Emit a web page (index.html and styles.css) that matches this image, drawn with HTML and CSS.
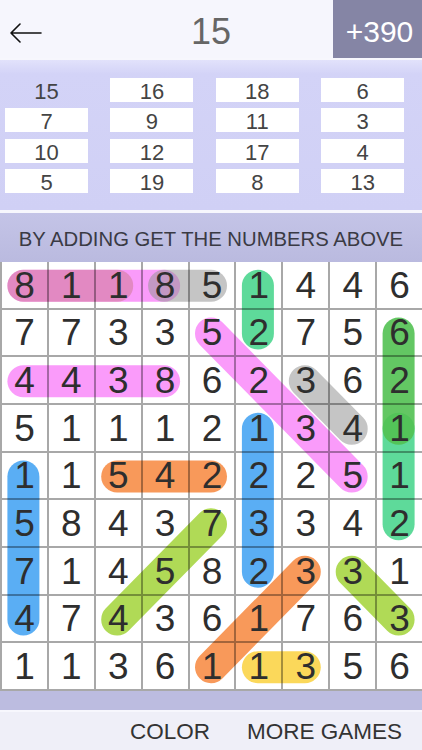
FILE: index.html
```html
<!DOCTYPE html>
<html>
<head>
<meta charset="utf-8">
<link rel="stylesheet" href="styles.css">
</head>
<body>
<div class="app">
  <header class="topbar">
    <div class="back">
      <svg width="32" height="20" viewBox="0 0 32 20"><path d="M1 10 H31 M10 1 L1 10 L10 19" fill="none" stroke="#111" stroke-width="1.6" stroke-linecap="round" stroke-linejoin="round"/></svg>
    </div>
    <div class="title">15</div>
    <div class="score">+390</div>
  </header>

  <section class="targets">
    <div class="tgrid">
      <div class="t current">15</div><div class="t">16</div><div class="t">18</div><div class="t">6</div>
      <div class="t">7</div><div class="t">9</div><div class="t">11</div><div class="t">3</div>
      <div class="t">10</div><div class="t">12</div><div class="t">17</div><div class="t">4</div>
      <div class="t">5</div><div class="t">19</div><div class="t">8</div><div class="t">13</div>
    </div>
  </section>

  <div class="banner">BY ADDING GET THE NUMBERS ABOVE</div>

  <section class="board">
    <svg class="pills" width="422" height="429" viewBox="0 0 422 429">
      <g fill="none" stroke-linecap="round" stroke-width="32">
        <line x1="23.4" y1="23.8" x2="164.1" y2="23.8" stroke="rgba(247,88,247,0.6)"/>
        <line x1="23.4" y1="23.8" x2="117.2" y2="23.8" stroke="rgba(190,110,110,0.4)"/>
        <line x1="164.1" y1="23.8" x2="211" y2="23.8" stroke="rgba(150,150,150,0.55)"/>
        <line x1="257.9" y1="23.8" x2="257.9" y2="71.5" stroke="rgba(40,205,120,0.75)"/>
        <line x1="211" y1="71.5" x2="351.7" y2="214.5" stroke="rgba(247,88,247,0.6)"/>
        <line x1="23.4" y1="119.2" x2="164.1" y2="119.2" stroke="rgba(247,88,247,0.6)"/>
        <line x1="304.8" y1="119.2" x2="351.7" y2="166.8" stroke="rgba(150,150,150,0.55)"/>
        <line x1="398.6" y1="166.8" x2="398.6" y2="262.2" stroke="rgba(40,205,120,0.75)"/>
        <line x1="398.6" y1="71.5" x2="398.6" y2="166.8" stroke="rgba(82,193,82,0.9)"/>
        <line x1="257.9" y1="166.8" x2="257.9" y2="309.8" stroke="rgba(20,140,240,0.7)"/>
        <line x1="23.4" y1="214.5" x2="23.4" y2="357.5" stroke="rgba(20,140,240,0.7)"/>
        <line x1="117.2" y1="214.5" x2="211" y2="214.5" stroke="rgba(245,110,20,0.7)"/>
        <line x1="117.2" y1="357.5" x2="211" y2="262.2" stroke="rgba(150,205,30,0.75)"/>
        <line x1="304.8" y1="309.8" x2="211" y2="405.2" stroke="rgba(245,110,20,0.7)"/>
        <line x1="351.7" y1="309.8" x2="398.6" y2="357.5" stroke="rgba(150,205,30,0.75)"/>
        <line x1="257.9" y1="405.2" x2="304.8" y2="405.2" stroke="rgba(250,200,20,0.7)"/>
      </g>
    </svg>
    <div class="c">8</div><div class="c">1</div><div class="c">1</div><div class="c">8</div><div class="c">5</div><div class="c">1</div><div class="c">4</div><div class="c">4</div><div class="c">6</div>
    <div class="c">7</div><div class="c">7</div><div class="c">3</div><div class="c">3</div><div class="c">5</div><div class="c">2</div><div class="c">7</div><div class="c">5</div><div class="c">6</div>
    <div class="c">4</div><div class="c">4</div><div class="c">3</div><div class="c">8</div><div class="c">6</div><div class="c">2</div><div class="c">3</div><div class="c">6</div><div class="c">2</div>
    <div class="c">5</div><div class="c">1</div><div class="c">1</div><div class="c">1</div><div class="c">2</div><div class="c">1</div><div class="c">3</div><div class="c">4</div><div class="c">1</div>
    <div class="c">1</div><div class="c">1</div><div class="c">5</div><div class="c">4</div><div class="c">2</div><div class="c">2</div><div class="c">2</div><div class="c">5</div><div class="c">1</div>
    <div class="c">5</div><div class="c">8</div><div class="c">4</div><div class="c">3</div><div class="c">7</div><div class="c">3</div><div class="c">3</div><div class="c">4</div><div class="c">2</div>
    <div class="c">7</div><div class="c">1</div><div class="c">4</div><div class="c">5</div><div class="c">8</div><div class="c">2</div><div class="c">3</div><div class="c">3</div><div class="c">1</div>
    <div class="c">4</div><div class="c">7</div><div class="c">4</div><div class="c">3</div><div class="c">6</div><div class="c">1</div><div class="c">7</div><div class="c">6</div><div class="c">3</div>
    <div class="c">1</div><div class="c">1</div><div class="c">3</div><div class="c">6</div><div class="c">1</div><div class="c">1</div><div class="c">3</div><div class="c">5</div><div class="c">6</div>
  </section>

  <div class="bottombar"></div>

  <footer class="footer">
    <span class="link">COLOR</span>
    <span class="link">MORE GAMES</span>
  </footer>
</div>
</body>
</html>
```

FILE: styles.css
```css
* { box-sizing: border-box; }
html, body { margin: 0; padding: 0; }
body {
  width: 422px;
  height: 750px;
  overflow: hidden;
  background: #f7f7fd;
  font-family: "Liberation Sans", Arial, sans-serif;
}
.app {
  display: flex;
  flex-direction: column;
  width: 422px;
  height: 750px;
}
.topbar {
  height: 58px;
  display: flex;
  align-items: stretch;
  background: #f6f6fd;
}
.back {
  width: 89px;
  display: flex;
  align-items: center;
  padding-left: 10px;
  padding-top: 8px;
}
.back svg { display: block; }
.title {
  flex: 1;
  display: flex;
  align-items: center;
  justify-content: center;
  font-size: 36px;
  color: #666;
  padding-top: 5px;
}
.score {
  width: 89px;
  display: flex;
  align-items: center;
  justify-content: center;
  background: #8585a5;
  color: #fff;
  font-size: 30px;
  padding-top: 5px;
  padding-left: 4px;
}
.targets {
  margin-top: 2px;
  height: 150px;
  background: linear-gradient(#e2e2fb 0px, #d3d3f7 14px, #d0d0f5 100%);
  padding: 18px 0 0 5px;
}
.tgrid {
  display: grid;
  grid-template-columns: repeat(4, 83px);
  grid-auto-rows: 24px;
  column-gap: 22.4px;
  row-gap: 6.4px;
}
.t {
  background: #fff;
  color: #444;
  font-size: 22px;
  line-height: 24px;
  padding-top: 2px;
  text-align: center;
}
.t.current { background: transparent; }
.banner {
  margin-top: 3px;
  height: 49px;
  background: linear-gradient(#c4c4e7, #babadf);
  color: #3a3a44;
  font-size: 20.3px;
  display: flex;
  align-items: center;
  justify-content: center;
  padding-top: 3px;
}
.board {
  position: relative;
  height: 429px;
  background: #fff;
  display: grid;
  grid-template-columns: repeat(9, 1fr);
  grid-template-rows: repeat(9, 1fr);
}
.pills {
  position: absolute;
  left: 0;
  top: 0;
  z-index: 0;
}
.c {
  position: relative;
  z-index: 1;
  border-left: 2px solid rgba(0, 0, 0, 0.34);
  border-bottom: 2px solid rgba(0, 0, 0, 0.34);
  display: flex;
  align-items: center;
  justify-content: center;
  font-size: 37px;
  color: #2e2e2e;
  padding-top: 2px;
}
.bottombar {
  height: 19px;
  background: #bcbce0;
}
.footer {
  margin-top: 2px;
  flex: 1;
  background: #efeff8;
  display: flex;
  align-items: center;
  justify-content: flex-end;
  gap: 37px;
  padding-right: 20px;
  padding-top: 1px;
}
.link {
  font-size: 22.5px;
  color: #333;
}
```
